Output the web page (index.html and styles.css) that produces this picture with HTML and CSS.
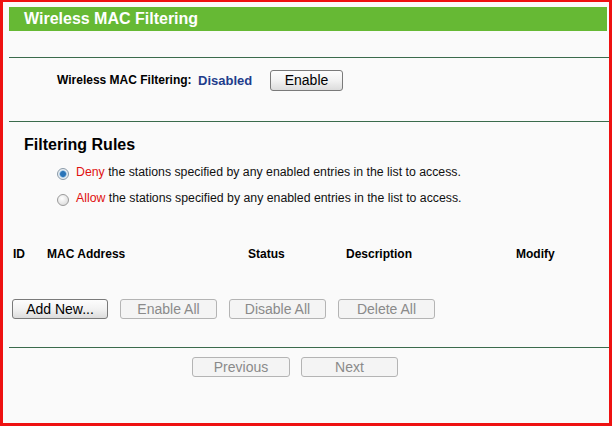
FILE: index.html
```html
<!DOCTYPE html>
<html lang="en">
<head>
  <meta charset="UTF-8">
  <title>Wireless MAC Filtering</title>
  <link rel="stylesheet" href="styles.css">
</head>
<body>
  <div class="frame">
    <div class="title-bar">Wireless MAC Filtering</div>
    <hr class="rule">
    <div class="status-row">
      <span class="status-label">Wireless MAC Filtering:</span>
      <span class="status-value">Disabled</span>
      <button class="btn btn-enable">Enable</button>
    </div>
    <hr class="rule">
    <div class="section-title">Filtering Rules</div>
    <div class="radio-row">
      <span class="radio checked"></span>
      <span class="radio-text"><span class="hl">Deny</span> the stations specified by any enabled entries in the list to access.</span>
    </div>
    <div class="radio-row">
      <span class="radio"></span>
      <span class="radio-text"><span class="hl">Allow</span> the stations specified by any enabled entries in the list to access.</span>
    </div>
    <div class="list-head">
      <span>ID</span>
      <span>MAC Address</span>
      <span>Status</span>
      <span>Description</span>
      <span>Modify</span>
    </div>
    <div class="actions">
      <button class="btn btn-add">Add New...</button>
      <button class="btn off">Enable All</button>
      <button class="btn off">Disable All</button>
      <button class="btn off">Delete All</button>
    </div>
    <hr class="rule rule-bottom">
    <div class="pager">
      <button class="btn off">Previous</button>
      <button class="btn off">Next</button>
    </div>
  </div>
</body>
</html>
```

FILE: styles.css
```css
html, body {
  margin: 0;
  padding: 0;
}
body {
  font-family: "Liberation Sans", Arial, sans-serif;
  color: #000;
}
.frame {
  box-sizing: border-box;
  width: 612px;
  height: 426px;
  border: solid #ee1111;
  border-width: 2px 3px 3px 3px;
  background: #fafafa;
  padding: 5px 0 0 6px;
}
.title-bar {
  height: 24px;
  margin-right: 2px;
  background: #66b934;
  color: #fff;
  font-size: 16px;
  font-weight: bold;
  line-height: 24px;
  padding-left: 15px;
}
.rule {
  margin: 26px 0 0 0;
  border: none;
  height: 1px;
  background: #3a6b4c;
}
.status-row {
  height: 44px;
  display: flex;
  align-items: center;
  padding-left: 48px;
  margin-bottom: 19px;
}
.status-row + .rule {
  margin-top: 0;
}
.status-label {
  font-size: 12px;
  font-weight: bold;
  width: 141px;
}
.status-value {
  font-size: 13px;
  font-weight: bold;
  color: #1f3d8c;
  width: 72px;
}
.btn {
  box-sizing: border-box;
  height: 20px;
  padding: 0;
  font-family: "Liberation Sans", Arial, sans-serif;
  font-size: 14px;
  color: #000;
  border: 1px solid #7a7a7a;
  border-radius: 3px;
  background: linear-gradient(#fdfdfd, #f2f2f2 50%, #dcdcdc);
}
.btn.off {
  color: #8a8a8a;
  border-color: #b4b4b4;
  background: #f4f4f4;
}
.btn-enable {
  width: 73px;
  height: 21px;
}
.section-title {
  font-size: 16px;
  font-weight: bold;
  line-height: 20px;
  margin: 13px 0 4px 15px;
}
.radio-row {
  height: 26px;
  display: flex;
  align-items: center;
  padding-left: 48px;
  font-size: 12.3px;
}
.radio {
  box-sizing: border-box;
  width: 12px;
  height: 12px;
  border-radius: 50%;
  border: 1px solid #9a9a9a;
  background: radial-gradient(circle at 40% 35%, #ffffff, #d4d4d4);
  margin-right: 7px;
  margin-top: 3px;
}
.radio.checked {
  border-color: #8a9aa8;
  background: radial-gradient(circle, #2a74b8 0 2.5px, #7fb2dc 3.2px, #e8eef3 4px);
}
.radio-text {
  color: #111;
}
.hl {
  color: #e01010;
}
.list-head {
  display: grid;
  grid-template-columns: 34px 201px 98px 170px auto;
  height: 20px;
  align-items: center;
  margin-top: 33px;
  padding-left: 4px;
  font-size: 12px;
  font-weight: bold;
}
.actions {
  display: flex;
  gap: 12px;
  margin-top: 35px;
  padding-left: 3px;
}
.actions .btn {
  width: 97px;
}
.actions .btn-add {
  width: 96px;
}
.rule-bottom {
  margin-top: 28px;
}
.pager {
  display: flex;
  gap: 11px;
  margin-top: 9px;
  padding-left: 183px;
}
.pager .btn {
  width: 98px;
}
.pager .btn + .btn {
  width: 97px;
}
```
